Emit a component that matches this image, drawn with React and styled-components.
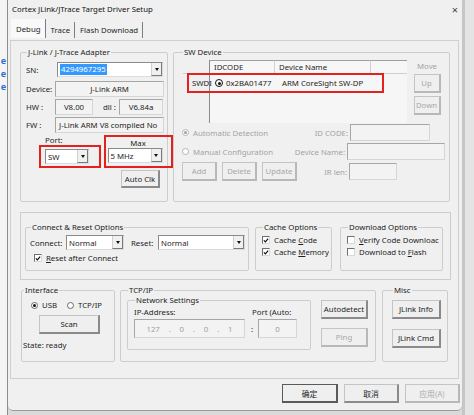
import React from "react";
import styled, { createGlobalStyle, css } from "styled-components";

const GlobalStyle = createGlobalStyle`
  html, body { margin: 0; padding: 0; background: #dcdcdc; }
  body {
    font-family: "Noto Sans", "Noto Sans CJK SC", sans-serif;
    font-size: 7.8px;
    color: #1e1e1e;
  }
  * { box-sizing: border-box; }
`;

const Screen = styled.div`
  display: flex;
  width: 474px;
  height: 415px;
  overflow: hidden;
  background: #dadada;
`;

const LeftStrip = styled.div`
  width: 8px;
  background: #f4f4f4;
  border-right: 1px solid #8c8c8c;
  display: flex;
  flex-direction: column;
  align-items: center;
  padding-top: 56px;
  gap: 3px;
  color: #2f6fd1;
  font-size: 9px;
  line-height: 10px;
  font-weight: bold;
`;

const Window = styled.div`
  width: 454px;
  height: 411px;
  background: #f0f0f0;
  border-bottom: 1px solid #9a9a9a;
  border-bottom-left-radius: 5px;
  border-bottom-right-radius: 5px;
  display: flex;
  flex-direction: column;
`;

const RightStrip = styled.div`
  width: 12px;
  background: linear-gradient(to right, #c6c6c6 0, #c6c6c6 3px, #e4e4e4 3px, #e4e4e4 100%);
`;

const TitleBar = styled.div`
  height: 18px;
  display: flex;
  align-items: center;
  justify-content: space-between;
  padding: 0 4px 0 4px;
  font-size: 7.8px;
  color: #111;
`;

const Close = styled.span`
  font-size: 11px;
  color: #444;
  line-height: 1;
`;

const TabStrip = styled.div`
  display: flex;
  align-items: flex-end;
  height: 22px;
  margin-left: 3px;
`;

const Tab = styled.div`
  height: ${(p) => (p.$active ? 19 : 16)}px;
  display: flex;
  align-items: center;
  padding: 0 4px 0 5px;
  border-right: 1px solid #7d7d7d;
  background: ${(p) => (p.$active ? "#f9f9f9" : "transparent")};
  margin-bottom: 2px;
`;

const TabPage = styled.div`
  height: 339px;
  margin: 0 3px 0 2px;
  border: 1px solid #cfcfcf;
  padding: 6px 0 0 9px;
  display: flex;
  flex-direction: column;
`;

const Row = styled.div`
  display: flex;
  align-items: ${(p) => p.$align || "flex-start"};
  justify-content: ${(p) => p.$justify || "flex-start"};
  gap: ${(p) => p.$gap || 0}px;
  margin-top: ${(p) => p.$mt || 0}px;
  margin-left: ${(p) => p.$ml || 0}px;
  height: ${(p) => (p.$h ? `${p.$h}px` : "auto")};
`;

const Col = styled.div`
  display: flex;
  flex-direction: column;
  align-items: ${(p) => p.$align || "flex-start"};
  gap: ${(p) => p.$gap || 0}px;
  margin-top: ${(p) => p.$mt || 0}px;
  margin-left: ${(p) => p.$ml || 0}px;
  width: ${(p) => (p.$w ? `${p.$w}px` : "auto")};
`;

const Group = styled.fieldset`
  margin: 0;
  min-width: 0;
  width: ${(p) => p.$w}px;
  height: ${(p) => p.$h}px;
  padding: ${(p) => p.$pad || "0 5px"};
  border: 1px solid #cdcdcd;
  border-radius: 2px;
  overflow: ${(p) => (p.$clip ? "hidden" : "visible")};
`;

const Legend = styled.legend`
  padding: 0 1px;
  margin-left: 1px;
  line-height: 10px;
  font-size: 7.8px;
  color: #222;
`;

const Frame = styled.div`
  width: 431px;
  height: 68px;
  margin-top: 10px;
  border: 1px solid #cdcdcd;
  padding: 9px 0 0 4px;
  display: flex;
  gap: 6px;
`;

const Label = styled.span`
  width: ${(p) => (p.$w ? `${p.$w}px` : "auto")};
  text-align: ${(p) => (p.$right ? "right" : "left")};
  color: ${(p) => (p.$dim ? "#a3a3a3" : "#1e1e1e")};
  margin-left: ${(p) => p.$ml || 0}px;
  margin-top: ${(p) => p.$mt || 0}px;
  padding-left: ${(p) => p.$pl || 0}px;
  white-space: nowrap;
  flex-shrink: 0;
`;

const Box = styled.div`
  width: ${(p) => p.$w}px;
  height: ${(p) => p.$h || 16}px;
  margin-left: ${(p) => p.$ml || 0}px;
  display: flex;
  align-items: center;
  justify-content: ${(p) => (p.$center ? "center" : "flex-start")};
  padding: 0 3px;
  white-space: nowrap;
  overflow: hidden;
  background: #f3f3f3;
  color: ${(p) => (p.$dim ? "#9a9a9a" : "#1e1e1e")};
  border: 1px solid #d6d6d6;
  border-top-color: #a6a6a6;
  border-left-color: #a6a6a6;
  flex-shrink: 0;
`;

const SelectBox = styled.div`
  width: ${(p) => p.$w}px;
  height: 15px;
  display: flex;
  align-items: stretch;
  background: #fff;
  border: 1px solid #8a8a8a;
  border-right-color: #dcdcdc;
  border-bottom-color: #dcdcdc;
  flex-shrink: 0;
`;

const SelectText = styled.div`
  flex: 1;
  display: flex;
  align-items: center;
  padding-left: 2px;
  overflow: hidden;
  white-space: nowrap;
`;

const Highlight = styled.span`
  background: #3399ff;
  color: #fff;
  padding: 0 1px;
  line-height: 11px;
`;

const ArrowBtn = styled.div`
  width: 11px;
  display: flex;
  align-items: center;
  justify-content: center;
  background: #f0f0f0;
  border-left: 1px solid #cfcfcf;
  border-right: 1px solid #7a7a7a;
  border-bottom: 1px solid #7a7a7a;
  &::after {
    content: "";
    border-left: 2.5px solid transparent;
    border-right: 2.5px solid transparent;
    border-top: 3px solid #111;
  }
`;

const Button = styled.div`
  width: ${(p) => p.$w}px;
  height: ${(p) => p.$h || 18}px;
  display: flex;
  align-items: center;
  justify-content: center;
  background: #efefef;
  border: 1px solid #c4c4c4;
  border-right: 2px solid #8a8a8a;
  border-bottom: 2px solid #8a8a8a;
  color: ${(p) => (p.$dim ? "#a8a8a8" : "#1e1e1e")};
  white-space: nowrap;
  flex-shrink: 0;
  ${(p) =>
    p.$dim &&
    css`
      border-right-color: #b8b8b8;
      border-bottom-color: #b8b8b8;
    `}
  ${(p) =>
    p.$default &&
    css`
      border: 1px solid #5a5a5a;
      border-right: 2px solid #5a5a5a;
      border-bottom: 2px solid #5a5a5a;
    `}
`;

/* red annotation frames drawn over the dialog */
const RedMark = styled.div`
  position: relative;
  z-index: 1;
  border: 2px solid #e3211f;
  padding: ${(p) => p.$pad || "2px"};
  display: flex;
  flex-direction: ${(p) => p.$dir || "row"};
  align-items: ${(p) => p.$align || "flex-start"};
  margin-left: ${(p) => p.$ml || 0}px;
  margin-top: ${(p) => p.$mt || 0}px;
  width: ${(p) => (p.$w ? `${p.$w}px` : "auto")};
  height: ${(p) => (p.$h ? `${p.$h}px` : "auto")};
  flex-shrink: 0;
`;

const List = styled.div`
  width: 224px;
  height: 63px;
  display: flex;
  flex-direction: column;
  margin-left: 1px;
`;

const ListHeader = styled.div`
  display: grid;
  grid-template-columns: 26px 65px 96px 37px;
  height: 14px;
  border-bottom: 1px solid #cfcfcf;
`;

const HeadCell = styled.div`
  display: flex;
  align-items: center;
  padding-left: 4px;
  border-top: ${(p) => (p.$blank ? "none" : "1px solid #9f9f9f")};
  border-left: ${(p) => (p.$first ? "1px solid #8a8a8a" : p.$blank ? "none" : "1px solid #d0d0d0")};
  background: ${(p) => (p.$blank ? "transparent" : "#f7f7f7")};
`;

const ListBody = styled.div`
  flex: 1;
  margin-left: 26px;
  border-left: 1px solid #8a8a8a;
  background: #f6f6f6;
`;

const DeviceRow = styled.div`
  display: grid;
  grid-template-columns: 23px 67px 104px;
  align-items: center;
  height: 16px;
`;

const Radio = styled.span`
  width: 7px;
  height: 7px;
  border-radius: 50%;
  border: 1px solid ${(p) => (p.$dim ? "#b5b5b5" : "#6a6a6a")};
  background: #fff;
  display: inline-flex;
  align-items: center;
  justify-content: center;
  margin-right: 4px;
  flex-shrink: 0;
  &::after {
    content: "";
    width: 3px;
    height: 3px;
    border-radius: 50%;
    background: ${(p) => (p.$on ? (p.$dim ? "#a0a0a0" : "#111") : "transparent")};
  }
`;

const BigRadio = styled(Radio)`
  width: 8px;
  height: 8px;
  border: 1.5px solid #111;
  margin-right: 3px;
  &::after { width: 3px; height: 3px; background: #111; }
`;

const Option = styled.div`
  display: flex;
  align-items: center;
  height: 12px;
  color: ${(p) => (p.$dim ? "#a3a3a3" : "#1e1e1e")};
  white-space: nowrap;
  overflow: hidden;
  width: ${(p) => (p.$w ? `${p.$w}px` : "auto")};
`;

const Check = styled.span`
  width: 8px;
  height: 8px;
  border: 1px solid #6f6f6f;
  border-right-color: #d8d8d8;
  border-bottom-color: #d8d8d8;
  background: #fff;
  display: inline-flex;
  align-items: center;
  justify-content: center;
  margin-right: 4px;
  flex-shrink: 0;
`;

const U = styled.span`
  text-decoration: underline;
`;

const Footer = styled.div`
  display: flex;
  justify-content: flex-end;
  gap: 6px;
  margin-top: 5px;
  padding-right: 2px;
  font-family: "Noto Sans CJK SC", "Noto Sans", sans-serif;
`;

const IpDots = styled.div`
  display: flex;
  justify-content: space-around;
  width: 100%;
  color: #a0a0a0;
  padding: 0 4px;
`;

function Tick() {
  return (
    <svg width="7" height="7" viewBox="0 0 7 7">
      <path d="M1 3.3 L2.8 5.2 L6 1.2" stroke="#111" strokeWidth="1.4" fill="none" />
    </svg>
  );
}

function Select({ w, children }) {
  return (
    <SelectBox $w={w}>
      <SelectText>{children}</SelectText>
      <ArrowBtn />
    </SelectBox>
  );
}

function CheckOption({ on, children }) {
  return (
    <Option>
      <Check>{on && <Tick />}</Check>
      {children}
    </Option>
  );
}

export default function App() {
  return (
    <>
      <GlobalStyle />
      <Screen>
        <LeftStrip>
          <span>e</span>
          <span>e</span>
          <span>e</span>
        </LeftStrip>
        <Window>
          <TitleBar>
            <span>Cortex JLink/JTrace Target Driver Setup</span>
            <Close>×</Close>
          </TitleBar>
          <TabStrip>
            <Tab $active>Debug</Tab>
            <Tab>Trace</Tab>
            <Tab>Flash Download</Tab>
          </TabStrip>
          <TabPage>
            <Row $gap={5}>
              <Group $w={148} $h={155}>
                <Legend>J-Link / J-Trace Adapter</Legend>
                <Row $align="center" $mt={5} $h={15}>
                  <Label $w={31}>SN:</Label>
                  <Select w={106}>
                    <Highlight>4294967295</Highlight>
                  </Select>
                </Row>
                <Row $align="center" $mt={4} $h={16}>
                  <Label $w={29}>Device:</Label>
                  <Box $w={109} $center>J-Link ARM</Box>
                </Row>
                <Row $align="center" $mt={2} $h={16}>
                  <Label $w={29}>HW :</Label>
                  <Box $w={38} $center>V8.00</Box>
                  <Label $ml={10} $w={16}>dll :</Label>
                  <Box $w={44} $center>V6.84a</Box>
                </Row>
                <Row $align="center" $mt={2} $h={16}>
                  <Label $w={29}>FW :</Label>
                  <Box $w={109}>J-Link ARM V8 compiled No</Box>
                </Row>
                <Row $mt={2}>
                  <Col $ml={13} $w={62}>
                    <Label $ml={6}>Port:</Label>
                    <RedMark $pad="2px 0 2px 4px" $w={62}>
                      <Select w={44}>SW</Select>
                    </RedMark>
                  </Col>
                  <RedMark $dir="column" $align="center" $pad="1px 8px 2px 1px" $w={69} $h={33} $ml={3}>
                    <Label $pl={6}>Max</Label>
                    <Select w={55}>5 MHz</Select>
                  </RedMark>
                </Row>
                <Row $mt={2} $justify="flex-end" style={{ paddingRight: 2 }}>
                  <Button $w={39} $h={18}>Auto Clk</Button>
                </Row>
              </Group>

              <Group $w={277} $h={155} $pad="0 4px 0 8px">
                <Legend>SW Device</Legend>
                <Row $mt={3}>
                  <List>
                    <ListHeader>
                      <HeadCell $blank />
                      <HeadCell $first>IDCODE</HeadCell>
                      <HeadCell>Device Name</HeadCell>
                      <HeadCell />
                    </ListHeader>
                    <ListBody />
                  </List>
                  <Col $ml={6} $gap={3} $align="center" $w={28}>
                    <Label $dim $mt={1}>Move</Label>
                    <Button $w={27} $h={19} $dim>Up</Button>
                    <Button $w={27} $h={19} $dim>Down</Button>
                  </Col>
                </Row>
                <RedMark $pad="0 0 0 3px" $w={197} $h={20} $ml={5} $mt={-50} $align="center">
                  <DeviceRow>
                    <span>SWDI</span>
                    <Option>
                      <BigRadio $on />
                      0x2BA01477
                    </Option>
                    <span>ARM CoreSight SW-DP</span>
                  </DeviceRow>
                </RedMark>
                <Row $mt={31} $align="center" $h={17}>
                  <Option $dim $w={120}>
                    <Radio $on $dim />
                    Automatic Detection
                  </Option>
                  <Label $dim $right $w={46}>ID CODE:</Label>
                  <Box $w={80} $h={17} $ml={2} />
                </Row>
                <Row $mt={2} $align="center" $h={17}>
                  <Option $dim $w={110}>
                    <Radio $dim />
                    Manual Configuration
                  </Option>
                  <Label $dim $right $w={56}>Device Name:</Label>
                  <Box $w={98} $h={17} $ml={2} />
                </Row>
                <Row $mt={2} $align="center" $gap={5}>
                  <Button $w={35} $h={19} $dim>Add</Button>
                  <Button $w={35} $h={19} $dim>Delete</Button>
                  <Button $w={35} $h={19} $dim>Update</Button>
                  <Label $dim $right $w={45}>IR len:</Label>
                  <Box $w={48} $h={17} $ml={-3} />
                </Row>
              </Group>
            </Row>

            <Frame>
              <Group $w={224} $h={49} $pad="0 4px">
                <Legend>Connect &amp; Reset Options</Legend>
                <Row $align="center" $mt={3} $h={15}>
                  <Label $w={36}>Connect:</Label>
                  <Select w={58}>Normal</Select>
                  <Label $ml={7} $w={27}>Reset:</Label>
                  <Select w={87}>Normal</Select>
                </Row>
                <Row $mt={2} $ml={4}>
                  <CheckOption on>
                    <span><U>R</U>eset after Connect</span>
                  </CheckOption>
                </Row>
              </Group>
              <Group $w={77} $h={49} $pad="0 6px">
                <Legend>Cache Options</Legend>
                <Col $mt={2}>
                  <CheckOption on>
                    <span>Cache <U>C</U>ode</span>
                  </CheckOption>
                  <CheckOption on>
                    <span>Cache <U>M</U>emory</span>
                  </CheckOption>
                </Col>
              </Group>
              <Group $w={103} $h={49} $pad="0 0 0 6px" $clip style={{ marginLeft: 2 }}>
                <Legend>Download Options</Legend>
                <Col $mt={2}>
                  <CheckOption>
                    <span><U>V</U>erify Code Downloac</span>
                  </CheckOption>
                  <CheckOption>
                    <span>Download to <U>F</U>lash</span>
                  </CheckOption>
                </Col>
              </Group>
            </Frame>

            <Row $gap={5} $mt={5} $ml={1}>
              <Group $w={94} $h={77} $pad="0 0 0 1px">
                <Legend>Interface</Legend>
                <Row $align="center" $mt={4} $ml={8}>
                  <Option $w={36}>
                    <Radio $on />
                    USB
                  </Option>
                  <Option>
                    <Radio />
                    TCP/IP
                  </Option>
                </Row>
                <Row $mt={4} $ml={16}>
                  <Button $w={61} $h={19}>Scan</Button>
                </Row>
                <Row $mt={6}>
                  <Label>State: ready</Label>
                </Row>
              </Group>

              <Group $w={256} $h={77} $pad="0 4px 0 6px">
                <Legend>TCP/IP</Legend>
                <Row $gap={10}>
                  <Group $w={184} $h={55} $pad="0 6px">
                    <Legend>Network Settings</Legend>
                    <Row $mt={2}>
                      <Label $w={118}>IP-Address:</Label>
                      <Label>Port (Auto:</Label>
                    </Row>
                    <Row $align="center" $mt={2}>
                      <Box $w={111} $h={19}>
                        <IpDots>
                          <span>127</span><span>.</span><span>0</span><span>.</span><span>0</span><span>.</span><span>1</span>
                        </IpDots>
                      </Box>
                      <Label $ml={6} $w={7}>:</Label>
                      <Box $w={39} $h={19} $center $dim>0</Box>
                    </Row>
                  </Group>
                  <Col $gap={9} $mt={5}>
                    <Button $w={47} $h={19}>Autodetect</Button>
                    <Button $w={47} $h={19} $dim>Ping</Button>
                  </Col>
                </Row>
              </Group>

              <Group $w={66} $h={77} $pad="0 0 0 9px" style={{ marginLeft: 1 }}>
                <Legend>Misc</Legend>
                <Col $gap={10} $mt={5}>
                  <Button $w={49} $h={19}>JLink Info</Button>
                  <Button $w={49} $h={19}>JLink Cmd</Button>
                </Col>
              </Group>
            </Row>
          </TabPage>
          <Footer>
            <Button $w={56} $h={19} $default>确定</Button>
            <Button $w={55} $h={19}>取消</Button>
            <Button $w={55} $h={19} $dim>应用(A)</Button>
          </Footer>
        </Window>
        <RightStrip />
      </Screen>
    </>
  );
}
